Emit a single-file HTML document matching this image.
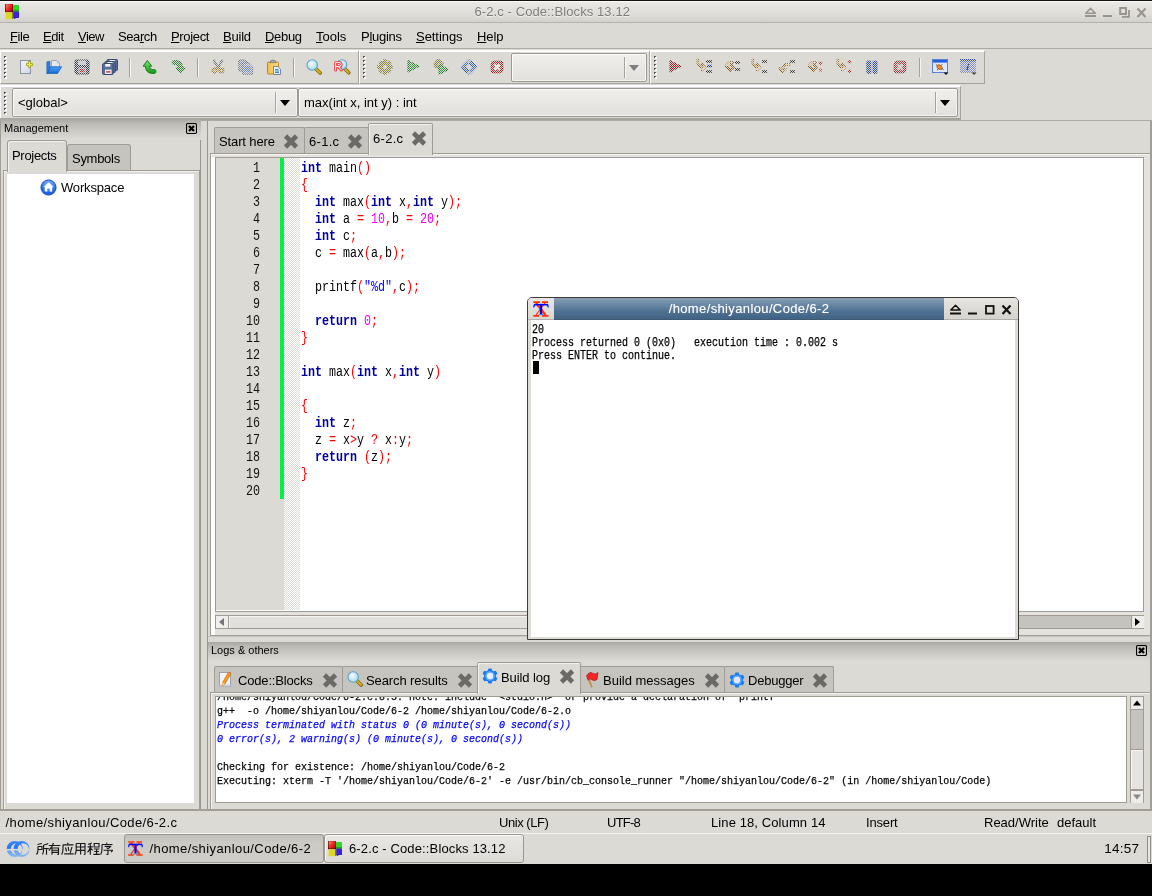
<!DOCTYPE html>
<html>
<head>
<meta charset="utf-8">
<title>6-2.c - Code::Blocks 13.12</title>
<style>
html,body{margin:0;padding:0;}
body{width:1152px;height:896px;position:relative;overflow:hidden;background:#dcdad5;font-family:"Liberation Sans",sans-serif;font-size:13px;color:#000;}
.abs{position:absolute;}
.t{position:absolute;white-space:pre;line-height:16px;height:16px;}
u{text-decoration:underline;text-underline-offset:1px;}
#title{left:0;top:0;width:1152px;height:23px;background:linear-gradient(#fdfdfc 0,#fdfdfc 1px,#e9e8e5 1.5px,#e5e4e0 5px,#dddbd6 15px,#d3d1cc 21px);border-top:1px solid #111;border-bottom:1px solid #b5b3ad;box-sizing:border-box;}
#titletxt{left:474.5px;top:4px;color:#7f7e7b;font-size:13px;letter-spacing:.09px;text-shadow:0 1px 0 rgba(255,255,255,.55);}
#menu{left:0;top:23px;width:1152px;height:26px;background:#dcdad5;border-bottom:1px solid #aeaba4;box-sizing:border-box;}
#menu .t{top:6px;font-size:13px;}
.tb{position:absolute;background:#dcdad5;box-sizing:border-box;border-top:2px solid #fff;border-left:1px solid #fff;border-bottom:1px solid #a6a39c;border-right:1px solid #a6a39c;}
.dot{position:absolute;width:3px;height:3px;}
.dot:before{content:"";position:absolute;left:1px;top:1px;width:2px;height:2px;background:#fff;}
.dot:after{content:"";position:absolute;left:0;top:0;width:2px;height:2px;background:#4c4b48;clip-path:polygon(0 0,100% 0,100% 20%,20% 100%,0 100%);}
.sep{position:absolute;width:1px;height:19px;top:58px;background:#a5a29b;border-right:1px solid #f6f5f2;}
.ico{position:absolute;width:16px;height:16px;top:59px;overflow:visible;}
.combo{position:absolute;box-sizing:border-box;border:1px solid #9c9992;border-radius:2px;background:linear-gradient(#f0efec,#e2e0dc);box-shadow:inset 1px 1px 0 #fbfbf9, inset -1px -1px 0 #f4f3f0;}
.cdiv{position:absolute;width:1px;background:#a5a29b;border-right:1px solid #f8f7f5;}
.arrow{position:absolute;width:0;height:0;border-left:5.5px solid transparent;border-right:5.5px solid transparent;border-top:6px solid #000;}
.ln{position:absolute;left:216px;width:44px;height:17px;line-height:17px;text-align:right;font-family:"Liberation Mono",monospace;font-size:14.5px;white-space:pre;transform:scaleX(.8046);transform-origin:100% 0;color:#111;}
.cl{position:absolute;left:301px;height:17px;line-height:17px;font-family:"Liberation Mono",monospace;font-size:14.5px;white-space:pre;transform:scaleX(.8046);transform-origin:0 0;color:#000;}
.cl b{color:#0000a0;font-weight:bold;}
.cl i{color:#ff0000;font-style:normal;}
.cl em{color:#f000f0;font-style:normal;}
.cl s{color:#0000ff;text-decoration:none;}
.lg{position:absolute;left:1px;height:14px;line-height:14px;font-family:"Liberation Mono",monospace;font-size:11.5px;white-space:pre;transform:scaleX(.8696);transform-origin:0 0;color:#000;}
.lb{color:#0000ff;font-style:italic;}
.lg,.xt{-webkit-text-stroke:.25px currentColor;}
.xt{position:absolute;left:531.8px;height:13px;line-height:13px;font-family:"Liberation Mono",monospace;font-size:12.5px;white-space:pre;transform:scaleX(.8);transform-origin:0 0;color:#000;}
.white{background:#fff;}
</style>
</head>
<body>
<div id="root" style="position:absolute;left:0;top:0;width:1152px;height:896px;will-change:transform;">
<svg width="0" height="0" style="position:absolute">
<defs>
<pattern id="chk" width="2" height="2" patternUnits="userSpaceOnUse"><rect x="0" y="0" width="1" height="1" fill="#fff"/><rect x="1" y="1" width="1" height="1" fill="#fff"/></pattern>
<mask id="dm" maskUnits="userSpaceOnUse" x="-2" y="-2" width="22" height="22"><rect x="-2" y="-2" width="22" height="22" fill="url(#chk)"/></mask>
<linearGradient id="pg" x1="0" y1="0" x2="1" y2="1"><stop offset="0" stop-color="#f4f6fa"/><stop offset="1" stop-color="#cfd6e4"/></linearGradient>
<linearGradient id="fold" x1="0" y1="0" x2="0" y2="1"><stop offset="0" stop-color="#4a9cf0"/><stop offset="1" stop-color="#1c6fd6"/></linearGradient>
<radialGradient id="lens" cx=".4" cy=".35" r=".7"><stop offset="0" stop-color="#f2fbff"/><stop offset="1" stop-color="#a8d8ee"/></radialGradient>
<linearGradient id="grn" x1="0" y1="0" x2="0" y2="1"><stop offset="0" stop-color="#7be07b"/><stop offset="1" stop-color="#119911"/></linearGradient>
<linearGradient id="clip" x1="0" y1="0" x2="1" y2="0"><stop offset="0" stop-color="#f2c24a"/><stop offset="1" stop-color="#f7dc8a"/></linearGradient>
</defs>
</svg>

<div id="title" class="abs"></div>
<div id="titletxt" class="t">6-2.c - Code::Blocks 13.12</div>
<div id="menu" class="abs">
<div class="t" style="left:10px;letter-spacing:-0.45px"><u>F</u>ile</div>
<div class="t" style="left:43px;letter-spacing:-0.4px"><u>E</u>dit</div>
<div class="t" style="left:78px;letter-spacing:-0.56px"><u>V</u>iew</div>
<div class="t" style="left:118px;letter-spacing:-0.41px">Sea<u>r</u>ch</div>
<div class="t" style="left:171px;letter-spacing:-0.33px"><u>P</u>roject</div>
<div class="t" style="left:223px;letter-spacing:-0.22px"><u>B</u>uild</div>
<div class="t" style="left:265px;letter-spacing:-0.32px"><u>D</u>ebug</div>
<div class="t" style="left:316px;letter-spacing:0px"><u>T</u>ools</div>
<div class="t" style="left:361px;letter-spacing:-0.29px">P<u>l</u>ugins</div>
<div class="t" style="left:416px;letter-spacing:-0.06px"><u>S</u>ettings</div>
<div class="t" style="left:477px;letter-spacing:-0.1px"><u>H</u>elp</div>
</div>
<div class="tb" style="left:0px;top:50px;width:359px;height:34px"></div>
<div class="tb" style="left:359px;top:50px;width:291px;height:34px"></div>
<div class="tb" style="left:650px;top:50px;width:335px;height:34px"></div>
<div class="tb" style="left:0px;top:85px;width:961px;height:34px"></div>
<div class="dot" style="left:4px;top:56px"></div>
<div class="dot" style="left:4px;top:60px"></div>
<div class="dot" style="left:4px;top:64px"></div>
<div class="dot" style="left:4px;top:68px"></div>
<div class="dot" style="left:4px;top:72px"></div>
<div class="dot" style="left:4px;top:76px"></div>
<div class="dot" style="left:363px;top:56px"></div>
<div class="dot" style="left:363px;top:60px"></div>
<div class="dot" style="left:363px;top:64px"></div>
<div class="dot" style="left:363px;top:68px"></div>
<div class="dot" style="left:363px;top:72px"></div>
<div class="dot" style="left:363px;top:76px"></div>
<div class="dot" style="left:654px;top:56px"></div>
<div class="dot" style="left:654px;top:60px"></div>
<div class="dot" style="left:654px;top:64px"></div>
<div class="dot" style="left:654px;top:68px"></div>
<div class="dot" style="left:654px;top:72px"></div>
<div class="dot" style="left:654px;top:76px"></div>
<div class="dot" style="left:4px;top:92px"></div>
<div class="dot" style="left:4px;top:96px"></div>
<div class="dot" style="left:4px;top:100px"></div>
<div class="dot" style="left:4px;top:104px"></div>
<div class="dot" style="left:4px;top:108px"></div>
<div class="dot" style="left:4px;top:112px"></div>
<svg class="ico" style="left:19px;top:59px" viewBox="0 0 16 16"><rect x="1.5" y="1.5" width="10" height="13" fill="url(#pg)" stroke="#8d93a1"/><path d="M9.5 2.5h2v2h2v2h-2v2h-2v-2h-2v-2h2z" fill="#eef04a" stroke="#a4a61c" stroke-width=".9"/></svg>
<svg class="ico" style="left:46px;top:59px" viewBox="0 0 16 16"><path d="M5.5 1.5h5.5l2.5 2.5v5h-8z" fill="#e4e7ee" stroke="#a2a7b2"/><path d="M10.8 1.6v2.6h2.6z" fill="#b9bec9"/><path d="M.8 3.6q0-1.2 1.2-1.2h2v10.6l-3.2 1.6z" fill="#2b7fe0" stroke="#1a5fc0" stroke-width=".6"/><path d="M1 14.4l3.6-6.6H15.6l-4 6.6z" fill="url(#fold)" stroke="#1560c4" stroke-width=".8"/></svg>
<svg class="ico" style="left:74px;top:59px" viewBox="0 0 16 16"><g mask="url(#dm)"><rect x="1" y="1" width="14" height="14" rx="1.5" fill="#3a4258" stroke="#1c2233" stroke-width="1"/><rect x="4" y="1.6" width="8" height="4.4" fill="#c4c8d0"/><rect x="4" y="8.6" width="8" height="5.6" fill="#9aa0ac"/><rect x="5.5" y="10" width="5" height="3" fill="#c03030"/></g></svg>
<svg class="ico" style="left:102px;top:59px" viewBox="0 0 16 16"><g transform="translate(5,0)"><path d="M0 1.5q0-1 1-1h8.5q1 0 1 1v9q0 1-1 1h-8.5q-1 0-1-1z" fill="#5a6f9c" stroke="#2f416b" stroke-width=".9"/><rect x="2.6" y="1" width="5.2" height="2.6" fill="#f4f6fa"/></g><g transform="translate(2.8,2)"><path d="M0 1.5q0-1 1-1h8.5q1 0 1 1v9q0 1-1 1h-8.5q-1 0-1-1z" fill="#5a6f9c" stroke="#2f416b" stroke-width=".9"/><rect x="2.6" y="1" width="5.2" height="2.6" fill="#f4f6fa"/></g><g transform="translate(0.6,4)"><path d="M0 1.5q0-1 1-1h8.5q1 0 1 1v9q0 1-1 1h-8.5q-1 0-1-1z" fill="#5a6f9c" stroke="#2f416b" stroke-width=".9"/><rect x="2.6" y="1" width="5.2" height="2.6" fill="#f4f6fa"/></g><rect x="3" y="10.6" width="6.6" height="4.4" fill="#e6e9f0"/><rect x="4.2" y="12.2" width="4.2" height="1.4" fill="#e03030"/></svg>
<div class="sep" style="left:129px"></div>
<svg class="ico" style="left:141px;top:59px" viewBox="0 0 16 16"><path d="M6.400 1.500L10.800 7.200H8.600Q8.600 10.400 11.500 10.600H13.400Q15 10.800 15 12.500Q15 14.300 13.400 14.400H11Q4.600 14 4.400 7.200H2Z" fill="url(#grn)" stroke="#0c7a0c" stroke-width=".9" stroke-linejoin="round"/></svg>
<svg class="ico" style="left:171px;top:59px" viewBox="0 0 16 16"><g mask="url(#dm)"><path d="M6.400 1.500L10.800 7.200H8.600Q8.600 10.400 11.500 10.600H13.400Q15 10.800 15 12.500Q15 14.300 13.400 14.400H11Q4.600 14 4.400 7.200H2Z" transform="rotate(180 8 8)" fill="#2f8a36" stroke="#14601c" stroke-width=".9" stroke-linejoin="round"/></g></svg>
<div class="sep" style="left:197px"></div>
<svg class="ico" style="left:210px;top:59px" viewBox="0 0 16 16"><g mask="url(#dm)"><path d="M4 1.6l3.8 6.8M12 1.6l-3.8 6.8" stroke="#6f7786" stroke-width="2.4" stroke-linecap="round"/><circle cx="4.6" cy="11.6" r="2.1" fill="none" stroke="#9a7c28" stroke-width="1.9"/><circle cx="11.4" cy="11.6" r="2.1" fill="none" stroke="#9a7c28" stroke-width="1.9"/><path d="M5.8 10l2.2-1.800 2.2 1.800" stroke="#9a7c28" stroke-width="1.6" fill="none"/></g></svg>
<svg class="ico" style="left:238px;top:59px" viewBox="0 0 16 16"><g mask="url(#dm)"><path d="M.8 1h6l3 3v8h-9z" fill="#8f98b0" stroke="#4d566e" stroke-width=".8"/><path d="M4.8 4h6.4l3.4 3.4v7.8h-9.8z" fill="#9aa6c4" stroke="#4d566e" stroke-width=".8"/><path d="M6.5 8h6M6.5 10h6M6.5 12h6" stroke="#3a62b8" stroke-width=".9"/></g></svg>
<svg class="ico" style="left:266px;top:59px" viewBox="0 0 16 16"><rect x="1.5" y="3" width="11" height="12" rx="1.2" fill="url(#clip)" stroke="#b98a1a"/><path d="M4 3.6q0-2.4 3-2.6 3 .2 3 2.6z" fill="#a8acb4" stroke="#70747c" stroke-width=".7"/><path d="M7.5 7.5h4.4l2.6 2.6v5.4h-7z" fill="#f2f5fb" stroke="#6c7c9c" stroke-width=".9"/><path d="M9 10.4h3.6M9 12h4M9 13.6h4" stroke="#3a78d8" stroke-width="1"/></svg>
<div class="sep" style="left:293px"></div>
<svg class="ico" style="left:306px;top:59px" viewBox="0 0 16 16"><path d="M9.6 9.4l4.6 4.6" stroke="#8a6a08" stroke-width="3.6" stroke-linecap="round"/><path d="M9.8 9.6l4.2 4.2" stroke="#d4b02a" stroke-width="2" stroke-linecap="round"/><circle cx="6.2" cy="6" r="5.2" fill="url(#lens)" stroke="#58a4c8" stroke-width="1.1"/></svg>
<svg class="ico" style="left:334px;top:59px" viewBox="0 0 16 16"><path d="M10.6 9.4l4.2 4.4" stroke="#8a6a08" stroke-width="3.6" stroke-linecap="round"/><path d="M10.8 9.6l3.8 4" stroke="#d4b02a" stroke-width="2" stroke-linecap="round"/><circle cx="8" cy="5.6" r="4.8" fill="url(#lens)" stroke="#58a4c8" stroke-width="1.1"/><path d="M1.6 11V3.4h3.2q2.4 0 2.4 2.1t-2.4 2.1h-3.2M4.6 7.6l2.8 3.4" fill="none" stroke="#e8454a" stroke-width="3" stroke-linejoin="round" stroke-linecap="round"/><path d="M1.6 11V3.4h3.2q2.4 0 2.4 2.1t-2.4 2.1h-3.2M4.6 7.6l2.8 3.4" fill="none" stroke="#fff" stroke-width="1" stroke-linejoin="round" stroke-linecap="round"/></svg>
<svg class="ico" style="left:377px;top:59px" viewBox="0 0 16 16"><g mask="url(#dm)"><rect x="6.27" y="0.80" width="3.46" height="14.40" transform="rotate(0 8 8)" fill="#8f8838" stroke="#5e5a1c" stroke-width=".5"/><rect x="6.27" y="0.80" width="3.46" height="14.40" transform="rotate(45 8 8)" fill="#8f8838" stroke="#5e5a1c" stroke-width=".5"/><rect x="6.27" y="0.80" width="3.46" height="14.40" transform="rotate(90 8 8)" fill="#8f8838" stroke="#5e5a1c" stroke-width=".5"/><rect x="6.27" y="0.80" width="3.46" height="14.40" transform="rotate(135 8 8)" fill="#8f8838" stroke="#5e5a1c" stroke-width=".5"/><circle cx="8" cy="8" r="4.90" fill="#8f8838"/><circle cx="8" cy="8" r="2.30" fill="#dcdad5" stroke="#5e5a1c" stroke-width=".5"/></g></svg>
<svg class="ico" style="left:405px;top:59px" viewBox="0 0 16 16"><g mask="url(#dm)"><path d="M3 1.6v11.4l11-5.7z" fill="#2e9a3a" stroke="#145c1c" stroke-width="1" stroke-linejoin="round"/></g></svg>
<svg class="ico" style="left:433px;top:59px" viewBox="0 0 16 16"><g mask="url(#dm)"><rect x="4.50" y="0.60" width="2.21" height="9.20" transform="rotate(0 5.6 5.2)" fill="#8f8838" stroke="#5e5a1c" stroke-width=".5"/><rect x="4.50" y="0.60" width="2.21" height="9.20" transform="rotate(45 5.6 5.2)" fill="#8f8838" stroke="#5e5a1c" stroke-width=".5"/><rect x="4.50" y="0.60" width="2.21" height="9.20" transform="rotate(90 5.6 5.2)" fill="#8f8838" stroke="#5e5a1c" stroke-width=".5"/><rect x="4.50" y="0.60" width="2.21" height="9.20" transform="rotate(135 5.6 5.2)" fill="#8f8838" stroke="#5e5a1c" stroke-width=".5"/><circle cx="5.6" cy="5.2" r="3.13" fill="#8f8838"/><circle cx="5.6" cy="5.2" r="1.47" fill="#dcdad5" stroke="#5e5a1c" stroke-width=".5"/><path d="M6 5.4v10l9.6-5z" fill="#2e9a3a" stroke="#145c1c" stroke-width="1" stroke-linejoin="round"/></g></svg>
<svg class="ico" style="left:461px;top:59px" viewBox="0 0 16 16"><g mask="url(#dm)"><path d="M8 2L14 8L8 14L2 8Z" fill="none" stroke="#1d418a" stroke-width="3.6" stroke-linejoin="round"/><path d="M8 2L14 8L8 14L2 8Z" fill="none" stroke="#4f7fd0" stroke-width="2" stroke-linejoin="round"/><path d="M9.600 .5l-3 3M6.400 15.500l3-3" stroke="#dcdad5" stroke-width="1.600"/></g></svg>
<svg class="ico" style="left:489px;top:59px" viewBox="0 0 16 16"><g mask="url(#dm)"><rect x="2.2" y="2.2" width="11.6" height="11.6" rx="2.4" fill="#b82c30" stroke="#7c1418" stroke-width="1"/><path d="M5.4 5.400l5.200 5.200M10.600 5.400l-5.200 5.200" stroke="#fff" stroke-width="2.2"/></g></svg>
<div class="combo" style="left:511px;top:53px;width:136px;height:29px"></div>
<div class="cdiv" style="left:624px;top:57px;height:21px"></div>
<div class="arrow" style="left:629px;top:65px;border-top-color:#7d7d7d"></div>
<svg class="ico" style="left:667px;top:59px" viewBox="0 0 16 16"><g mask="url(#dm)"><path d="M3 1.600v11.400l11-5.700z" fill="#a82428" stroke="#6c1014" stroke-width="1" stroke-linejoin="round"/></g></svg>
<svg class="ico" style="left:696px;top:59px" viewBox="0 0 16 16"><g mask="url(#dm)"><path d="M1.800 1v3.200l3.400 3.600h3.400M6.200 4.800l3 3-3 3" fill="none" stroke="#7a4e14" stroke-width="2.500" stroke-linejoin="round" stroke-linecap="round"/><path d="M1.800 1v3.200l3.400 3.600h3.400M6.200 4.800l3 3-3 3" fill="none" stroke="#f0d4a0" stroke-width="1" stroke-linejoin="round" stroke-linecap="round"/><rect x="10" y="1.25" width="6" height="2.500" fill="#2a2a2a"/><rect x="11" y="5.75" width="5" height="2.500" fill="#2030a0"/><rect x="10" y="11.25" width="6" height="2.500" fill="#2a2a2a"/></g></svg>
<svg class="ico" style="left:724px;top:59px" viewBox="0 0 16 16"><g mask="url(#dm)"><path d="M8.500 3.500h-3.200l-3.200 3.400 4.600 4.800 2.800-2.800-2.400-2.600" fill="none" stroke="#7a4e14" stroke-width="2.500" stroke-linejoin="round" stroke-linecap="round"/><path d="M8.500 3.500h-3.200l-3.200 3.400 4.600 4.800 2.800-2.800-2.400-2.600" fill="none" stroke="#f0d4a0" stroke-width="1" stroke-linejoin="round" stroke-linecap="round"/><rect x="11" y="2.25" width="5" height="2.500" fill="#2a2a2a"/><rect x="11" y="9.25" width="5" height="2.500" fill="#2a2a2a"/></g></svg>
<svg class="ico" style="left:751px;top:59px" viewBox="0 0 16 16"><g mask="url(#dm)"><path d="M1.800 1v3.200l3.400 3.600h3.400M6.200 4.800l3 3-3 3" fill="none" stroke="#7a4e14" stroke-width="2.500" stroke-linejoin="round" stroke-linecap="round"/><path d="M1.800 1v3.200l3.400 3.600h3.400M6.200 4.800l3 3-3 3" fill="none" stroke="#f0d4a0" stroke-width="1" stroke-linejoin="round" stroke-linecap="round"/><rect x="11" y="1.25" width="5" height="2.500" fill="#2a2a2a"/><rect x="11" y="11.25" width="5" height="2.500" fill="#2a2a2a"/></g></svg>
<svg class="ico" style="left:779px;top:59px" viewBox="0 0 16 16"><g mask="url(#dm)"><path d="M10 5.500h-3.400l-3 3.800v2.400M1 9.400l2.600 3.200 3-2.400" fill="none" stroke="#7a4e14" stroke-width="2.500" stroke-linejoin="round" stroke-linecap="round"/><path d="M10 5.500h-3.400l-3 3.800v2.400M1 9.400l2.600 3.200 3-2.400" fill="none" stroke="#f0d4a0" stroke-width="1" stroke-linejoin="round" stroke-linecap="round"/><rect x="11" y="1.25" width="5" height="2.500" fill="#2a2a2a"/><rect x="11" y="11.25" width="5" height="2.500" fill="#2a2a2a"/></g></svg>
<svg class="ico" style="left:807px;top:59px" viewBox="0 0 16 16"><g mask="url(#dm)"><path d="M8.500 3.500h-3.200l-3.200 3.400 4.600 4.800 2.800-2.800-2.400-2.600" fill="none" stroke="#7a4e14" stroke-width="2.500" stroke-linejoin="round" stroke-linecap="round"/><path d="M8.500 3.500h-3.200l-3.200 3.400 4.600 4.800 2.800-2.800-2.400-2.600" fill="none" stroke="#f0d4a0" stroke-width="1" stroke-linejoin="round" stroke-linecap="round"/><rect x="12" y="2.500" width="3" height="3" fill="#b02020" transform="rotate(45 13.500 4)"/><rect x="12" y="9.500" width="3" height="3" fill="#c05050"/></g></svg>
<svg class="ico" style="left:836px;top:59px" viewBox="0 0 16 16"><g mask="url(#dm)"><path d="M1.800 1v3.200l3.400 3.600h3.400M6.200 4.800l3 3-3 3" fill="none" stroke="#7a4e14" stroke-width="2.500" stroke-linejoin="round" stroke-linecap="round"/><path d="M1.800 1v3.200l3.400 3.600h3.400M6.200 4.800l3 3-3 3" fill="none" stroke="#f0d4a0" stroke-width="1" stroke-linejoin="round" stroke-linecap="round"/><rect x="12" y="1.500" width="3" height="3" fill="#b02020" transform="rotate(45 13.500 3)"/><rect x="12" y="10.500" width="3" height="3" fill="#b02020" transform="rotate(45 13.500 12)"/></g></svg>
<svg class="ico" style="left:864px;top:59px" viewBox="0 0 16 16"><g mask="url(#dm)"><rect x="2.800" y="2" width="4" height="12.400" rx=".8" fill="#3454a8" stroke="#1c3070" stroke-width=".8"/><rect x="9" y="2" width="4" height="12.400" rx=".8" fill="#3454a8" stroke="#1c3070" stroke-width=".8"/></g></svg>
<svg class="ico" style="left:892px;top:59px" viewBox="0 0 16 16"><g mask="url(#dm)"><rect x="2.2" y="2.2" width="11.6" height="11.6" rx="2.4" fill="#a84048" stroke="#7c2428" stroke-width="1"/><path d="M5.4 5.400l5.200 5.200M10.600 5.400l-5.200 5.200" stroke="#d4c8c8" stroke-width="2.2"/></g></svg>
<div class="sep" style="left:919px"></div>
<svg class="ico" style="left:932px;top:59px" viewBox="0 0 16 16"><rect x=".5" y=".5" width="15" height="13" fill="#dfe9fb" stroke="#5a80d8"/><rect x="1" y="1" width="14" height="2.600" fill="#2a5ee0"/><path d="M11.500 13.500h5l-2.500 2.600z" fill="#111"/><ellipse cx="7.600" cy="8.200" rx="3" ry="2.100" transform="rotate(35 7.600 8.200)" fill="#f08a28" stroke="#a04c08" stroke-width=".6"/><path d="M3.800 5.400l1.600 1.400M5.200 11.200l1-1.600M10.200 5.200l-1 1.400M11.600 10.600l-1.600-1" stroke="#222" stroke-width=".7"/></svg>
<svg class="ico" style="left:960px;top:59px" viewBox="0 0 16 16"><g mask="url(#dm)"><rect x="0" y="0" width="16" height="14" fill="#8a94c4"/><rect x="0" y="0" width="16" height="2.400" fill="#3a50a8"/></g><path d="M11.500 13.500h5l-2.500 2.600z" fill="#444"/><path d="M8.600 4.800l-.3 1.200M8 7l-.9 4" stroke="#3040a8" stroke-width="1.300"/></svg>
<div class="combo" style="left:12px;top:88px;width:286px;height:29px"></div>
<div class="cdiv" style="left:275px;top:92px;height:21px"></div>
<div class="arrow" style="left:280px;top:100px"></div>
<div class="t" style="left:18px;top:95px">&lt;global&gt;</div>
<div class="combo" style="left:298px;top:88px;width:660px;height:29px"></div>
<div class="cdiv" style="left:935px;top:92px;height:21px"></div>
<div class="arrow" style="left:940px;top:100px"></div>
<div class="t" style="left:304px;top:95px">max(int x, int y) : int</div>

<div class="abs" style="left:0px;top:118px;width:1152px;height:3px;background:linear-gradient(#a29f98,#aeaba5)"></div>
<div class="abs" style="left:961px;top:118px;width:191px;height:2px;background:#dcdad5"></div>
<div class="abs" style="left:0px;top:118px;width:201px;height:20px;background:linear-gradient(#a6a49f,#bab8b3 25%,#cbc9c4 60%,#d9d7d2)"></div>
<div class="t" style="left:4px;top:120px;font-size:11px">Management</div>
<svg class="abs" style="left:186px;top:123px" width="11" height="11" viewBox="0 0 11 11"><rect x=".5" y=".5" width="10" height="10" rx="1.5" fill="none" stroke="#000" stroke-width="1.100"/><path d="M3 3l5 5M8 3l-5 5" stroke="#000" stroke-width="2.300"/></svg>
<div class="abs" style="left:200px;top:140px;width:1px;height:670px;background:#9b978f"></div>
<div class="abs" style="left:201px;top:121px;width:6px;height:691px;background:#dcdad5"></div>
<div class="abs" style="left:207px;top:121px;width:1px;height:691px;background:#9b978f"></div>
<div class="abs" style="left:67px;top:144px;width:64px;height:27px;background:#c6c4bf;border:1px solid #a09c94;border-bottom:none;border-radius:3px 3px 0 0;box-sizing:border-box"></div>
<div class="t" style="left:72px;top:151px;letter-spacing:-.28px">Symbols</div>
<div class="abs" style="left:3px;top:170px;width:197px;height:640px;border:1px solid #a09c94;box-sizing:border-box;background:#dcdad5;box-shadow:inset 1px 1px 0 #f3f2ef"></div>
<div class="abs" style="left:7px;top:140px;width:60px;height:32px;background:#dcdad5;border:1px solid #a09c94;border-bottom:none;border-radius:3px 3px 0 0;box-sizing:border-box;box-shadow:inset 1px 1px 0 #f3f2ef"></div>
<div class="t" style="left:12px;top:148px;letter-spacing:-.3px">Projects</div>
<div class="abs" style="left:7px;top:174px;width:187px;height:629px;background:#fff"></div>
<svg class="abs" style="left:40px;top:179px" width="17" height="17" viewBox="0 0 17 17"><defs><radialGradient id="wsg" cx=".5" cy=".3" r=".8"><stop offset="0" stop-color="#8fc0ff"/><stop offset=".6" stop-color="#2a6ff0"/><stop offset="1" stop-color="#0a3cc8"/></radialGradient></defs><circle cx="8.500" cy="8.500" r="7.600" fill="url(#wsg)" stroke="#1a44c0" stroke-width=".9"/><path d="M8.500 3.600l5 4.400h-1.300v4.400h-2.500v-3h-2.400v3h-2.500v-4.400h-1.300z" fill="#fff"/></svg>
<div class="t" style="left:61px;top:180px;letter-spacing:-.17px">Workspace</div>

<div class="abs" style="left:214px;top:127px;width:91px;height:27px;background:#c6c4bf;border:1px solid #a09c94;border-bottom:none;border-radius:2px 2px 0 0;box-sizing:border-box"></div>
<div class="t" style="left:219px;top:134px;letter-spacing:-.12px">Start here</div>
<svg class="abs" style="left:283px;top:134px" width="16" height="15" viewBox="0 0 16 15"><path d="M2.500 2l11 11M13.500 2l-11 11" stroke="#6b6a67" stroke-width="4.600"/></svg>
<div class="abs" style="left:304px;top:127px;width:65px;height:27px;background:#c6c4bf;border:1px solid #a09c94;border-bottom:none;border-radius:2px 2px 0 0;box-sizing:border-box"></div>
<div class="t" style="left:309px;top:134px;letter-spacing:.3px">6-1.c</div>
<svg class="abs" style="left:347px;top:134px" width="16" height="15" viewBox="0 0 16 15"><path d="M2.500 2l11 11M13.500 2l-11 11" stroke="#6b6a67" stroke-width="4.600"/></svg>
<div class="abs" style="left:210px;top:153px;width:941px;height:483px;border:1px solid #a09c94;box-sizing:border-box;background:#e4e2de;box-shadow:inset 1px 1px 0 #f5f4f1"></div>
<div class="abs" style="left:368px;top:123px;width:65px;height:32px;background:#dcdad5;border:1px solid #a09c94;border-bottom:none;border-radius:2px 2px 0 0;box-sizing:border-box;box-shadow:inset 1px 1px 0 #f3f2ef"></div>
<div class="t" style="left:373px;top:131px;letter-spacing:.3px">6-2.c</div>
<svg class="abs" style="left:411px;top:131px" width="16" height="15" viewBox="0 0 16 15"><path d="M2.500 2l11 11M13.500 2l-11 11" stroke="#6b6a67" stroke-width="4.600"/></svg>
<div class="abs" style="left:211px;top:157px;width:4px;height:478px;background:#fff"></div>
<div class="abs" style="left:215px;top:157px;width:929px;height:455px;border:1px solid #a09c94;box-sizing:border-box;background:#fff"></div>
<div class="abs" style="left:216px;top:158px;width:64px;height:452px;background:#dcdad5"></div>
<div class="abs" style="left:280px;top:158px;width:4px;height:341px;background:#00f048"></div>
<div class="abs" style="left:280px;top:499px;width:4px;height:111px;background:#dcdad5"></div>
<div class="abs" style="left:284px;top:158px;width:16px;height:452px;background-color:#fff;background-image:conic-gradient(#dcdad5 25%,transparent 0 50%,#dcdad5 0 75%,transparent 0);background-size:2px 2px"></div>
<div class="ln" style="top:159.5px">1</div>
<div class="ln" style="top:176.5px">2</div>
<div class="ln" style="top:193.5px">3</div>
<div class="ln" style="top:210.5px">4</div>
<div class="ln" style="top:227.5px">5</div>
<div class="ln" style="top:244.5px">6</div>
<div class="ln" style="top:261.5px">7</div>
<div class="ln" style="top:278.5px">8</div>
<div class="ln" style="top:295.5px">9</div>
<div class="ln" style="top:312.5px">10</div>
<div class="ln" style="top:329.5px">11</div>
<div class="ln" style="top:346.5px">12</div>
<div class="ln" style="top:363.5px">13</div>
<div class="ln" style="top:380.5px">14</div>
<div class="ln" style="top:397.5px">15</div>
<div class="ln" style="top:414.5px">16</div>
<div class="ln" style="top:431.5px">17</div>
<div class="ln" style="top:448.5px">18</div>
<div class="ln" style="top:465.5px">19</div>
<div class="ln" style="top:482.5px">20</div>
<div class="cl" style="top:159.5px"><b>int</b> main<i>()</i></div>
<div class="cl" style="top:176.5px"><i>{</i></div>
<div class="cl" style="top:193.5px">  <b>int</b> max<i>(</i><b>int</b> x<i>,</i><b>int</b> y<i>);</i></div>
<div class="cl" style="top:210.5px">  <b>int</b> a <i>=</i> <em>10</em><i>,</i>b <i>=</i> <em>20</em><i>;</i></div>
<div class="cl" style="top:227.5px">  <b>int</b> c<i>;</i></div>
<div class="cl" style="top:244.5px">  c <i>=</i> max<i>(</i>a<i>,</i>b<i>);</i></div>
<div class="cl" style="top:278.5px">  printf<i>(</i><s>"%d"</s><i>,</i>c<i>);</i></div>
<div class="cl" style="top:312.5px">  <b>return</b> <em>0</em><i>;</i></div>
<div class="cl" style="top:329.5px"><i>}</i></div>
<div class="cl" style="top:363.5px"><b>int</b> max<i>(</i><b>int</b> x<i>,</i><b>int</b> y<i>)</i></div>
<div class="cl" style="top:397.5px"><i>{</i></div>
<div class="cl" style="top:414.5px">  <b>int</b> z<i>;</i></div>
<div class="cl" style="top:431.5px">  z <i>=</i> x<i>&gt;</i>y <i>?</i> x<i>:</i>y<i>;</i></div>
<div class="cl" style="top:448.5px">  <b>return</b> <i>(</i>z<i>);</i></div>
<div class="cl" style="top:465.5px"><i>}</i></div>
<div class="abs" style="left:215px;top:615px;width:929px;height:14px;border:1px solid #a09c94;box-sizing:border-box;background:#c5c3be"></div>
<div class="abs" style="left:216px;top:616px;width:12px;height:12px;background:#f0efec;border-right:1px solid #a09c94"></div>
<svg class="abs" style="left:219px;top:618px" width="6" height="8"><path d="M5 0v8l-5-4z" fill="#777"/></svg>
<div class="abs" style="left:229px;top:616px;width:400px;height:12px;background:#e2e0dc;box-shadow:inset 1px 1px 0 #f6f5f2"></div>
<div class="abs" style="left:1131px;top:616px;width:12px;height:12px;background:#eeedea;border-left:1px solid #a09c94"></div>
<svg class="abs" style="left:1135px;top:618px" width="6" height="8"><path d="M0 0v8l5-4z" fill="#000"/></svg>

<div class="abs" style="left:208px;top:636px;width:944px;height:1px;background:#c9c7c2"></div>
<div class="abs" style="left:208px;top:642px;width:944px;height:18px;background:linear-gradient(#a9a7a2,#bcbab5 25%,#cbc9c4 60%,#d9d7d2)"></div>
<div class="t" style="left:211px;top:642px;font-size:11px">Logs &amp; others</div>
<svg class="abs" style="left:1136px;top:645px" width="11" height="11" viewBox="0 0 11 11"><rect x=".5" y=".5" width="10" height="10" rx="1.500" fill="none" stroke="#000" stroke-width="1.100"/><path d="M3 3l5 5M8 3l-5 5" stroke="#000" stroke-width="2.300"/></svg>
<div class="abs" style="left:214px;top:666px;width:129px;height:27px;background:#c6c4bf;border:1px solid #a09c94;border-bottom:none;border-radius:2px 2px 0 0;box-sizing:border-box"></div>
<div class="t" style="left:238px;top:673px;letter-spacing:-0.17px">Code::Blocks</div>
<svg class="abs" style="left:322px;top:673px" width="16" height="15" viewBox="0 0 16 15"><path d="M2.500 2l11 11M13.500 2l-11 11" stroke="#6b6a67" stroke-width="4.600"/></svg>
<div class="abs" style="left:342px;top:666px;width:136px;height:27px;background:#c6c4bf;border:1px solid #a09c94;border-bottom:none;border-radius:2px 2px 0 0;box-sizing:border-box"></div>
<div class="t" style="left:366px;top:673px;letter-spacing:-0.1px">Search results</div>
<svg class="abs" style="left:457px;top:673px" width="16" height="15" viewBox="0 0 16 15"><path d="M2.500 2l11 11M13.500 2l-11 11" stroke="#6b6a67" stroke-width="4.600"/></svg>
<div class="abs" style="left:579px;top:666px;width:146px;height:27px;background:#c6c4bf;border:1px solid #a09c94;border-bottom:none;border-radius:2px 2px 0 0;box-sizing:border-box"></div>
<div class="t" style="left:603px;top:673px;letter-spacing:0px">Build messages</div>
<svg class="abs" style="left:704px;top:673px" width="16" height="15" viewBox="0 0 16 15"><path d="M2.500 2l11 11M13.500 2l-11 11" stroke="#6b6a67" stroke-width="4.600"/></svg>
<div class="abs" style="left:724px;top:666px;width:110px;height:27px;background:#c6c4bf;border:1px solid #a09c94;border-bottom:none;border-radius:2px 2px 0 0;box-sizing:border-box"></div>
<div class="t" style="left:748px;top:673px;letter-spacing:-0.2px">Debugger</div>
<svg class="abs" style="left:812px;top:673px" width="16" height="15" viewBox="0 0 16 15"><path d="M2.500 2l11 11M13.500 2l-11 11" stroke="#6b6a67" stroke-width="4.600"/></svg>
<div class="abs" style="left:210px;top:692px;width:941px;height:118px;border:1px solid #a09c94;box-sizing:border-box;background:#dcdad5;box-shadow:inset 1px 1px 0 #f5f4f1"></div>
<div class="abs" style="left:477px;top:662px;width:104px;height:32px;background:#dcdad5;border:1px solid #a09c94;border-bottom:none;border-radius:2px 2px 0 0;box-sizing:border-box;box-shadow:inset 1px 1px 0 #f3f2ef"></div>
<div class="t" style="left:501px;top:670px;letter-spacing:-0.08px">Build log</div>
<svg class="abs" style="left:559px;top:669px" width="16" height="15" viewBox="0 0 16 15"><path d="M2.500 2l11 11M13.500 2l-11 11" stroke="#6b6a67" stroke-width="4.600"/></svg>
<svg class="abs" style="left:218px;top:671px" width="16" height="17" viewBox="0 0 16 17"><rect x="1.500" y="1.500" width="11" height="14" fill="#f4f4f8" stroke="#9aa0b4"/><path d="M1.500 13.500h11v2h-11z" fill="#c8cce0"/><path d="M10.500 1l2.600 1.400-6 10.600-2.800 1.800.2-3.200z" fill="#f49a20" stroke="#c06808" stroke-width=".6"/><path d="M4.400 14.600l.2-3 2.400 1.400z" fill="#f8e0b0"/></svg>
<svg class="abs" style="left:347px;top:671px" width="16" height="16" viewBox="0 0 16 16"><path d="M9.600 9.400l4.600 4.600" stroke="#8a6a08" stroke-width="3.600" stroke-linecap="round"/><path d="M9.800 9.600l4.200 4.200" stroke="#d4b02a" stroke-width="2" stroke-linecap="round"/><circle cx="6.200" cy="6" r="5.200" fill="url(#lens)" stroke="#58a4c8" stroke-width="1.100"/></svg>
<svg class="abs" style="left:482px;top:668px" width="16" height="16" viewBox="0 0 16 16"><g fill="#1a7af0"><circle cx="8" cy="8" r="6"/><rect x="6" y=".4" width="4" height="15.200" rx="1" /><rect x="6" y=".4" width="4" height="15.200" rx="1" transform="rotate(60 8 8)"/><rect x="6" y=".4" width="4" height="15.200" rx="1" transform="rotate(120 8 8)"/></g><circle cx="8" cy="8" r="4.800" fill="#5aa8ff"/><circle cx="8" cy="8" r="3.200" fill="#e8eefc"/></svg>
<svg class="abs" style="left:729px;top:672px" width="16" height="16" viewBox="0 0 16 16"><g fill="#1a7af0"><circle cx="8" cy="8" r="6"/><rect x="6" y=".4" width="4" height="15.200" rx="1" /><rect x="6" y=".4" width="4" height="15.200" rx="1" transform="rotate(60 8 8)"/><rect x="6" y=".4" width="4" height="15.200" rx="1" transform="rotate(120 8 8)"/></g><circle cx="8" cy="8" r="4.800" fill="#5aa8ff"/><circle cx="8" cy="8" r="3.200" fill="#e0e8f8"/></svg>
<svg class="abs" style="left:584px;top:671px" width="16" height="17" viewBox="0 0 16 17"><path d="M3.600 4.600l4 11" stroke="#c89040" stroke-width="1.800" stroke-linecap="round"/><path d="M2.600 4.800q3-4.600 6-2.600t5.400-.6l-1 7q-3 2-5.400 0t-3.400.8z" fill="#f02828" stroke="#b01010" stroke-width=".7"/></svg>
<div class="abs" style="left:215px;top:696px;width:912px;height:107px;border:1px solid #a09c94;box-sizing:border-box;background:#fff"></div>
<div class="abs" style="left:216px;top:697px;width:910px;height:105px;overflow:hidden">
<div class="lg" style="top:-7.5px">/home/shiyanlou/Code/6-2.c:8:5: note: include '&lt;stdio.h&gt;' or provide a declaration of 'printf'</div>
<div class="lg" style="top:6.5px">g++  -o /home/shiyanlou/Code/6-2 /home/shiyanlou/Code/6-2.o</div>
<div class="lg lb" style="top:20.5px">Process terminated with status 0 (0 minute(s), 0 second(s))</div>
<div class="lg lb" style="top:34.5px">0 error(s), 2 warning(s) (0 minute(s), 0 second(s))</div>
<div class="lg" style="top:48.5px"></div>
<div class="lg" style="top:62.5px">Checking for existence: /home/shiyanlou/Code/6-2</div>
<div class="lg" style="top:76.5px">Executing: xterm -T '/home/shiyanlou/Code/6-2' -e /usr/bin/cb_console_runner "/home/shiyanlou/Code/6-2" (in /home/shiyanlou/Code)</div>
</div>
<div class="abs" style="left:1130px;top:696px;width:14px;height:107px;border:1px solid #a09c94;box-sizing:border-box;background:#c5c3be"></div>
<div class="abs" style="left:1131px;top:697px;width:12px;height:12px;background:#eeedea;border-bottom:1px solid #a09c94"></div>
<svg class="abs" style="left:1133px;top:700px" width="8" height="6"><path d="M0 5.500h8l-4-5z" fill="#000"/></svg>
<div class="abs" style="left:1131px;top:749px;width:12px;height:39px;background:#e6e4e0;border-top:1px solid #a09c94;border-bottom:1px solid #a09c94;box-shadow:inset 1px 1px 0 #f8f7f5"></div>
<div class="abs" style="left:1131px;top:790px;width:12px;height:12px;background:#eeedea;border-top:1px solid #a09c94"></div>
<svg class="abs" style="left:1133px;top:794px" width="8" height="6"><path d="M0 .5h8l-4 5z" fill="#888"/></svg>

<div class="abs" style="left:527px;top:297px;width:492px;height:343px;box-sizing:border-box;border:1px solid #3c3b38;border-radius:5px 5px 0 0;background:#dedcd8;overflow:hidden"></div>
<div class="abs" style="left:528px;top:298px;width:26px;height:22px;background:linear-gradient(#e8e7e4,#d8d6d1);border-radius:4px 0 0 0"></div>
<div class="abs" style="left:554px;top:298px;width:390px;height:22px;background:linear-gradient(#8a9fb6 0,#6584a2 35%,#4f7192 60%,#3f6080 100%)"></div>
<div class="abs" style="left:944px;top:298px;width:74px;height:22px;background:linear-gradient(#e6e5e1,#d4d2cd);border-radius:0 4px 0 0"></div>
<div class="abs" style="left:528px;top:319px;width:490px;height:1px;background:rgba(60,70,80,.25)"></div>
<div class="t" style="left:554px;top:301px;width:390px;text-align:center;color:#fff;font-size:13px;letter-spacing:.37px;text-shadow:0 0 1px rgba(255,255,255,.5)">/home/shiyanlou/Code/6-2</div>
<svg class="abs" style="left:532px;top:300px" width="18" height="18" viewBox="0 0 18 18"><g fill="none"><path d="M1.300 2.100h6.700M10 2.100h6M1.300 15.900h5.700M10 15.900h6.500" stroke="#ff3000" stroke-width="1.800"/><path d="M4 3l9.500 12" stroke="#ff3800" stroke-width="2.400"/><path d="M13 3l-9 12" stroke="#ff3000" stroke-width="1.200"/><path d="M2 4.700h14" stroke="#0000ff" stroke-width="1.600"/><path d="M2.400 4.700l-.6 2.200M15.600 4.700l.6 2.200" stroke="#0020ff" stroke-width="1.400" stroke-linecap="round"/><path d="M9 4.700v9.500" stroke="#0000ff" stroke-width="2.200"/><path d="M6.800 14.600h4.600" stroke="#3a7aff" stroke-width="1.200"/></g></svg>
<svg class="abs" style="left:948px;top:303px" width="66" height="13" viewBox="0 0 66 13"><g stroke="#111" stroke-width="1.800" fill="none"><path d="M2.800 7l4.700-4.700 4.700 4.700z" stroke-linejoin="round" stroke-width="1.500"/><path d="M2 10.500h11" stroke-width="2"/><path d="M20 10.500h9" stroke-width="2"/><rect x="38" y="3" width="7.600" height="7.600"/><path d="M54.500 2.500l8 8.500M62.500 2.500l-8 8.500" stroke-width="2.200"/></g></svg>
<div class="abs" style="left:531px;top:320px;width:484px;height:317px;background:#fff"></div>
<div class="xt" style="top:323.5px">20</div>
<div class="xt" style="top:336.5px">Process returned 0 (0x0)   execution time : 0.002 s</div>
<div class="xt" style="top:349.5px">Press ENTER to continue.</div>
<div class="abs" style="left:533px;top:361px;width:6px;height:13px;background:#000"></div>

<div class="abs" style="left:0px;top:811px;width:1152px;height:23px;background:#dcdad5"></div>
<div class="abs" style="left:0px;top:809px;width:1152px;height:2px;background:#a29e96"></div>
<div class="abs" style="left:0px;top:121px;width:1px;height:689px;background:#a29e96"></div>
<div class="abs" style="left:1150px;top:121px;width:2px;height:689px;background:#a29e96"></div>
<div class="t" style="left:5.6px;top:815px;letter-spacing:.38px">/home/shiyanlou/Code/6-2.c</div>
<div class="t" style="left:499px;top:815px;letter-spacing:-.46px">Unix (LF)</div>
<div class="t" style="left:607px;top:815px;letter-spacing:-.76px">UTF-8</div>
<div class="t" style="left:711px;top:815px;letter-spacing:.1px">Line 18, Column 14</div>
<div class="t" style="left:866px;top:815px;letter-spacing:-.16px">Insert</div>
<div class="t" style="left:984px;top:815px;">Read/Write</div>
<div class="t" style="left:1057px;top:815px;">default</div>
<div class="abs" style="left:0px;top:833px;width:1152px;height:1px;background:#f6f5f3"></div>
<div class="abs" style="left:0px;top:834px;width:1152px;height:30px;background:#dcdad5"></div>
<svg class="abs" style="left:6px;top:840px" width="25" height="18" viewBox="0 0 25 18"><defs><linearGradient id="lg1" gradientUnits="userSpaceOnUse" x1="0" y1="1" x2="0" y2="17"><stop offset="0" stop-color="#3a88f4"/><stop offset=".5" stop-color="#2474ee"/><stop offset=".5" stop-color="#5a98ea"/><stop offset="1" stop-color="#8ab8f2"/></linearGradient></defs><g fill="url(#lg1)" fill-rule="evenodd"><path d="M.7 9a8 8 0 1 0 16 0a8 8 0 1 0 -16 0zM4.800 9a5.700 5.700 0 1 0 11.400 0a5.700 5.700 0 1 0 -11.400 0z"/><path d="M7.500 9a8 8 0 1 0 16 0a8 8 0 1 0 -16 0zM11.600 9a5.700 5.700 0 1 0 11.400 0a5.700 5.700 0 1 0 -11.400 0z"/></g><rect x="0" y="8.900" width="25" height="1.600" fill="#dcdad5"/></svg>
<svg class="abs" style="left:35.5px;top:842px" width="13" height="13" viewBox="0 0 13 13"><path d="M1.500 2.500L6 1.500M2 4.500H6V7.500H2M2 4.500V8Q2 11 .5 12.500M7.600 3Q10 2.800 12.200 1.500M7.600 3V7Q7.600 10.500 6.500 12.500M7.600 6.500H12.800M10.500 6.500V12.800" fill="none" stroke="#1a1a1a" stroke-width="1.150"/></svg>
<svg class="abs" style="left:48.3px;top:842px" width="13" height="13" viewBox="0 0 13 13"><path d="M.8 3.500H12.400M5.500 1Q4.500 5 .8 8.500M4 6H10.500V12Q10.500 12.800 9.300 12.600M4 6V12.800M4 8.200H10.500M4 10.300H10.500" fill="none" stroke="#1a1a1a" stroke-width="1.150"/></svg>
<svg class="abs" style="left:61.1px;top:842px" width="13" height="13" viewBox="0 0 13 13"><path d="M6.500 .8L7 2.200M2 2.800H12.500M2 2.800V7Q2 10.500 .6 12.600M4.500 5.500L5.500 9.500M7.200 4.800L7.800 9M11 5L9.200 10.800M3.200 11.800H12.600" fill="none" stroke="#1a1a1a" stroke-width="1.150"/></svg>
<svg class="abs" style="left:73.9px;top:842px" width="13" height="13" viewBox="0 0 13 13"><path d="M2.200 1.500H11V12Q11 12.800 9.800 12.600M2.200 1.500V8Q2.200 11 .8 12.600M2.200 5H11M2.200 8.300H11M6.600 1.500V12.600" fill="none" stroke="#1a1a1a" stroke-width="1.150"/></svg>
<svg class="abs" style="left:86.7px;top:842px" width="13" height="13" viewBox="0 0 13 13"><path d="M4.800 1Q3 2 1 2.300M.6 4.800H5.800M3.300 2.200V12.800M3.300 5.500Q2.400 8.500 .5 10.200M3.300 6L5.600 8.400M7.200 1.500H12V5H7.200ZM6.800 7H12.400M7.200 9.500H12M6.400 12.400H12.800M9.600 7V12.400" fill="none" stroke="#1a1a1a" stroke-width="1.150"/></svg>
<svg class="abs" style="left:99.5px;top:842px" width="13" height="13" viewBox="0 0 13 13"><path d="M6.500 .6L7 1.800M2 2.500H12.500M2 2.500V7Q2 10.500 .6 12.600M4.600 4.400H10.600Q9.500 6 7.800 6.600M6.500 5.600L8.400 7M3.600 8.200H12.600Q12 9.400 11 10M8 8.200V12Q8 12.800 6.400 12.400" fill="none" stroke="#1a1a1a" stroke-width="1.150"/></svg>
<div class="abs" style="left:124px;top:834px;width:200px;height:29px;box-sizing:border-box;border:1px solid #9b978f;border-radius:3px;background:linear-gradient(#c2c0bb,#cccac5 30%,#cfcdc8);"></div>
<div class="abs" style="left:324px;top:834px;width:200px;height:29px;box-sizing:border-box;border:1px solid #9b978f;border-radius:3px;background:linear-gradient(#e8e7e4,#dddbd6);box-shadow:inset 1px 1px 0 #f8f8f6"></div>
<svg class="abs" style="left:126.500px;top:840px" width="17" height="17" viewBox="0 0 18 18"><g fill="none"><path d="M1.300 2.100h6.700M10 2.100h6M1.300 15.900h5.700M10 15.900h6.500" stroke="#ff3000" stroke-width="1.800"/><path d="M4 3l9.500 12" stroke="#ff3800" stroke-width="2.400"/><path d="M13 3l-9 12" stroke="#ff3000" stroke-width="1.200"/><path d="M2 4.700h14" stroke="#0000ff" stroke-width="1.600"/><path d="M2.400 4.700l-.6 2.200M15.600 4.700l.6 2.200" stroke="#0020ff" stroke-width="1.400" stroke-linecap="round"/><path d="M9 4.700v9.500" stroke="#0000ff" stroke-width="2.200"/><path d="M6.800 14.600h4.600" stroke="#3a7aff" stroke-width="1.200"/></g></svg>
<div class="t" style="left:149.5px;top:841px;letter-spacing:.41px">/home/shiyanlou/Code/6-2</div>
<svg class="abs" style="left:328px;top:841px" width="15" height="16" viewBox="0 0 15 16"><defs><linearGradient id="cbr328" x1="0" y1="0" x2="1" y2="1"><stop offset="0" stop-color="#ff8a80"/><stop offset=".5" stop-color="#ee2a20"/><stop offset="1" stop-color="#a80000"/></linearGradient></defs><rect x="0" y="0" width="8" height="8.200" fill="#300" /><rect x=".6" y=".2" width="7" height="7.400" fill="url(#cbr328)"/><rect x="8" y="1" width="6" height="6.400" rx=".6" fill="#2fd62a"/><rect x="8" y="6.600" width="6" height="1" fill="#0a5a08"/><rect x=".6" y="8.200" width="7" height="7" rx=".5" fill="#dcd820"/><rect x="7.400" y="8" width=".8" height="7" fill="#4a4800"/><rect x="8.200" y="7.800" width="5.800" height="6.200" rx=".5" fill="#3a22d8"/><path d="M8.200 13.600h4l-3 1.400z" fill="#2a12b8"/></svg>
<div class="t" style="left:349px;top:841px;letter-spacing:.13px">6-2.c - Code::Blocks 13.12</div>
<div class="t" style="left:1104.3px;top:841px;font-size:13.5px;letter-spacing:.25px">14:57</div>
<div class="abs" style="left:1147px;top:836px;width:4px;height:27px;border:1px solid #8f8b84;box-sizing:border-box;background:#e8e7e4"></div>
<svg class="abs" style="left:5px;top:4px" width="15" height="16" viewBox="0 0 15 16"><defs><linearGradient id="cbr5" x1="0" y1="0" x2="1" y2="1"><stop offset="0" stop-color="#ff8a80"/><stop offset=".5" stop-color="#ee2a20"/><stop offset="1" stop-color="#a80000"/></linearGradient></defs><rect x="0" y="0" width="8" height="8.200" fill="#300" /><rect x=".6" y=".2" width="7" height="7.400" fill="url(#cbr5)"/><rect x="8" y="1" width="6" height="6.400" rx=".6" fill="#2fd62a"/><rect x="8" y="6.600" width="6" height="1" fill="#0a5a08"/><rect x=".6" y="8.200" width="7" height="7" rx=".5" fill="#dcd820"/><rect x="7.400" y="8" width=".8" height="7" fill="#4a4800"/><rect x="8.200" y="7.800" width="5.800" height="6.200" rx=".5" fill="#3a22d8"/><path d="M8.200 13.600h4l-3 1.400z" fill="#2a12b8"/></svg>
<svg class="abs" style="left:1083px;top:5px" width="66" height="15" viewBox="0 0 66 15"><g stroke="#99958e" fill="none"><path d="M2.800 8.200l4.800-4.800 4.800 4.800z" stroke-linejoin="round" stroke-width="1.500"/><path d="M2 11h11" stroke-width="2"/><path d="M20 11h9" stroke-width="2"/><rect x="37.200" y="3" width="5.800" height="6" stroke-width="2"/><path d="M46 5v6.800h-7" stroke-width="1.800"/><path d="M54.500 3.500l8 8.500M62.500 3.500l-8 8.500" stroke-width="2.200"/></g></svg>

<div class="abs" style="left:0;top:864px;width:1152px;height:32px;background:#000"></div>
</div>
</body>
</html>
